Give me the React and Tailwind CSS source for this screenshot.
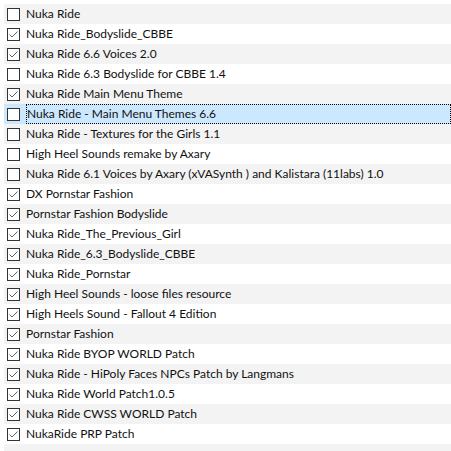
import React from "react";

const mods = [
  { name: "Nuka Ride", on: false },
  { name: "Nuka Ride_Bodyslide_CBBE", on: true },
  { name: "Nuka Ride 6.6 Voices 2.0", on: true },
  { name: "Nuka Ride 6.3 Bodyslide for CBBE 1.4", on: false },
  { name: "Nuka Ride Main Menu Theme", on: true },
  { name: "Nuka Ride - Main Menu Themes 6.6", on: false, selected: true },
  { name: "Nuka Ride - Textures for the Girls 1.1", on: false },
  { name: "High Heel Sounds remake by Axary", on: false },
  { name: "Nuka Ride 6.1 Voices by Axary (xVASynth ) and Kalistara (11labs) 1.0", on: false },
  { name: "DX Pornstar Fashion", on: true },
  { name: "Pornstar Fashion Bodyslide", on: true },
  { name: "Nuka Ride_The_Previous_Girl", on: true },
  { name: "Nuka Ride_6.3_Bodyslide_CBBE", on: true },
  { name: "Nuka Ride_Pornstar", on: true },
  { name: "High Heel Sounds - loose files resource", on: true },
  { name: "High Heels Sound - Fallout 4 Edition", on: true },
  { name: "Pornstar Fashion", on: true },
  { name: "Nuka Ride BYOP WORLD Patch", on: true },
  { name: "Nuka Ride - HiPoly Faces NPCs Patch by Langmans", on: true },
  { name: "Nuka Ride World Patch1.0.5", on: true },
  { name: "Nuka Ride CWSS WORLD Patch", on: true },
  { name: "NukaRide PRP Patch", on: true },
];

const Box = ({ on }) => (
  <div className="w-[13px] h-[13px] border border-[#333333] bg-white flex items-center justify-center shrink-0">
    {on && (
      <svg width="11" height="11" viewBox="0 0 11 11">
        <polyline points="1.5,5.5 4,8 9.5,2.5" fill="none" stroke="#606060" strokeWidth="1" />
      </svg>
    )}
  </div>
);

const Row = ({ mod, index }) => {
  const stripe = index % 2 === 0 ? "bg-[#f3f3f3]" : "bg-white";
  return (
    <div className={`h-[20px] flex items-center ${stripe}`}>
      <div
        className={`h-full flex items-center flex-1 pl-[3px] ${
          mod.selected ? "bg-[#cce8ff]" : ""
        }`}
      >
        <Box on={mod.on} />
        <span
          className={`ml-[6px] h-full flex-1 flex items-center whitespace-nowrap text-[12px] text-[#111111] ${
            mod.selected ? "border border-dotted border-black" : ""
          }`}
        >
          {mod.name}
        </span>
      </div>
    </div>
  );
};

export default function App() {
  return (
    <div
      className="w-[451px] h-[451px] overflow-hidden bg-white pt-[4px] pl-[4px]"
      style={{ fontFamily: 'Lato, "Noto Sans", sans-serif' }}
    >
      {mods.map((m, i) => (
        <Row key={i} mod={m} index={i} />
      ))}
      <div className="h-[20px] bg-[#f3f3f3] flex items-start justify-center text-[12px] font-semibold text-black pt-[4px]">
        Fonts
      </div>
    </div>
  );
}
